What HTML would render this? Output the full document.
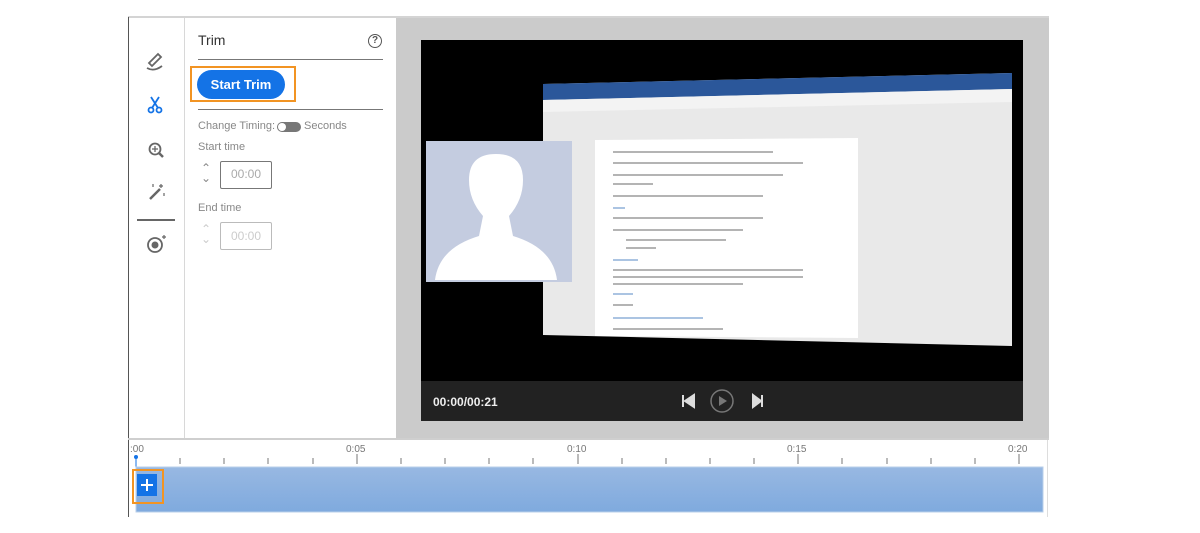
<!DOCTYPE html>
<html><head><meta charset="utf-8"><style>
*{margin:0;padding:0;box-sizing:border-box}
body{width:1200px;height:533px;background:#fff;font-family:"Liberation Sans",sans-serif;position:relative;overflow:hidden}
.a{position:absolute}
</style></head><body>
<div class="a" style="left:128px;top:16px;width:921px;height:2px;background:#d4d4d4"></div>
<div class="a" style="left:128px;top:17px;width:1px;height:500px;background:#555"></div>
<div class="a" style="left:184px;top:18px;width:1px;height:421px;background:#d8d8d8"></div>
<div class="a" style="left:396px;top:18px;width:653px;height:421px;background:#cbcbcb"></div>
<div class="a" style="left:128px;top:438px;width:921px;height:2px;background:#cfcfcf"></div>
<div class="a" style="left:1047px;top:440px;width:1px;height:77px;background:#ddd"></div>

<svg class="a" style="left:140px;top:45px" width="32" height="220" viewBox="0 0 32 220">
<g fill="none" stroke="#666" stroke-width="1.8">
<path d="M9 18 L18 9 L21 12 L12 21 Z"/><path d="M7 23 Q14 27 22 21"/>
<circle cx="15" cy="104" r="5.5"/><path d="M19 108 L23 112" stroke-width="2.5"/><path d="M15 101v6M12 104h6" stroke-width="1.3"/>
<path d="M10 154 L20 144" stroke-width="2.5"/><path d="M21 139v4M19 141h4M13 139v3M24 148v3" stroke-width="1.2"/>
<circle cx="15" cy="200" r="7"/>
</g>
<circle cx="15" cy="200" r="3.5" fill="#666"/><path d="M24 190v4M22 192h4" stroke="#666" stroke-width="1.2"/>
<g fill="none" stroke="#1473e6" stroke-width="1.8"><circle cx="11" cy="65" r="2.5"/><circle cx="19" cy="65" r="2.5"/><path d="M12 63 L19 52 M18 63 L11 52"/></g>
</svg>
<div class="a" style="left:137px;top:219px;width:38px;height:2px;background:#666"></div>

<div class="a" style="left:198px;top:32px;font-size:14px;color:#333">Trim</div>
<div class="a" style="left:368px;top:34px;width:14px;height:14px;border:1.5px solid #555;border-radius:50%;font-size:10px;text-align:center;line-height:11px;color:#555;font-weight:bold">?</div>
<div class="a" style="left:198px;top:59px;width:185px;height:1px;background:#777"></div>
<div class="a" style="left:190px;top:66px;width:106px;height:36px;border:2px solid #f29423"></div>
<div class="a" style="left:197px;top:70px;width:88px;height:29px;background:#1473e6;border-radius:15px;color:#fff;font-weight:bold;font-size:13px;text-align:center;line-height:29px">Start Trim</div>
<div class="a" style="left:198px;top:109px;width:185px;height:1px;background:#777"></div>
<div class="a" style="left:198px;top:120px;font-size:11px;color:#888">Change Timing:</div>
<div class="a" style="left:277px;top:122px;width:24px;height:10px;border-radius:5px;background:#777"></div>
<div class="a" style="left:278px;top:123px;width:8px;height:8px;border-radius:4px;background:#fff"></div>
<div class="a" style="left:304px;top:120px;font-size:11px;color:#888">Seconds</div>
<div class="a" style="left:198px;top:141px;font-size:11px;color:#888">Start time</div>
<div class="a" style="left:201px;top:163px;font-size:12px;color:#888;line-height:10px">&#8963;<br>&#8964;</div>
<div class="a" style="left:220px;top:161px;width:52px;height:28px;border:1.5px solid #777;border-radius:2px;font-size:12px;color:#aaa;text-align:center;line-height:25px">00:00</div>
<div class="a" style="left:198px;top:202px;font-size:11px;color:#888">End time</div>
<div class="a" style="left:201px;top:224px;font-size:12px;color:#ccc;line-height:10px">&#8963;<br>&#8964;</div>
<div class="a" style="left:220px;top:222px;width:52px;height:28px;border:1px solid #bbb;border-radius:2px;font-size:12px;color:#ccc;text-align:center;line-height:26px">00:00</div>

<div class="a" style="left:421px;top:40px;width:602px;height:341px;background:#000"></div>
<svg class="a" style="left:421px;top:40px" width="602" height="341" viewBox="0 0 602 341">
<polygon points="122,44 591,33 591,306 122,295" fill="#e9e9e9"/>
<polygon points="122,44 591,33 591,49 122,60" fill="#2b579a"/>
<polygon points="122,60 591,49 591,62 122,72" fill="#f3f3f3"/>
<polygon points="174,100 437,98 437,298 174,296" fill="#fff"/>
<g stroke="#888" stroke-width="1.2">
<path d="M192 112h160M192 123h190M192 135h170M192 144h40M192 156h150M192 178h150M192 190h130M205 200h100M205 208h30M192 230h190M192 237h190M192 244h130M192 265h20M192 289h110"/>
</g>
<g stroke="#8fb0d8" stroke-width="1.5"><path d="M192 168h12M192 220h25M192 254h20M192 278h90"/></g>
<rect x="5" y="101" width="146" height="141" fill="#c4cce0"/>
<path d="M14 240 Q18 208 58 196 L62 176 Q48 160 48 140 Q48 114 75 114 Q102 114 102 140 Q102 160 88 176 L92 196 Q132 208 136 240 Z" fill="#fff"/>
</svg>
<div class="a" style="left:421px;top:381px;width:602px;height:40px;background:#222"></div>
<div class="a" style="left:433px;top:395px;font-size:12px;color:#eee;font-weight:bold">00:00/00:21</div>
<svg class="a" style="left:676px;top:386px" width="92" height="30" viewBox="0 0 92 30">
<path d="M7 9v12M18 9L9 15L18 21Z" stroke="#ddd" fill="#ddd" stroke-width="2"/>
<circle cx="46" cy="15" r="11" fill="none" stroke="#777" stroke-width="1.5"/>
<path d="M43 10L51 15L43 20Z" fill="#777"/>
<path d="M86 9v12M77 9L85 15L77 21Z" stroke="#ddd" fill="#ddd" stroke-width="2"/>
</svg>

<svg class="a" style="left:128px;top:440px" width="921" height="80" viewBox="0 0 921 80">
<g font-size="10" fill="#777" font-family="Liberation Sans"><text x="2" y="12">:00</text><text x="218" y="12">0:05</text><text x="439" y="12">0:10</text><text x="659" y="12">0:15</text><text x="880" y="12">0:20</text></g>
<path d="M52 18v6M96 18v6M140 18v6M185 18v6M273 18v6M317 18v6M361 18v6M405 18v6M494 18v6M538 18v6M582 18v6M626 18v6M714 18v6M759 18v6M803 18v6M847 18v6" stroke="#777"/>
<path d="M229 14v10M450 14v10M670 14v10M891 14v10" stroke="#777"/>
<circle cx="8" cy="17" r="2" fill="#1473e6"/><path d="M8 17v10" stroke="#1473e6"/>
<defs><linearGradient id="g" x1="0" y1="0" x2="0" y2="1"><stop offset="0" stop-color="#98b8e2"/><stop offset="1" stop-color="#7faade"/></linearGradient></defs>
<rect x="8" y="27" width="907" height="45" fill="url(#g)" stroke="#b9cfea"/>
<rect x="5" y="30" width="30" height="33" fill="none" stroke="#f29423" stroke-width="2"/>
<rect x="9" y="34" width="20" height="22" fill="#1473e6"/>
<path d="M19 39v12M13 45h12" stroke="#fff" stroke-width="2"/>
</svg>
</body></html>
